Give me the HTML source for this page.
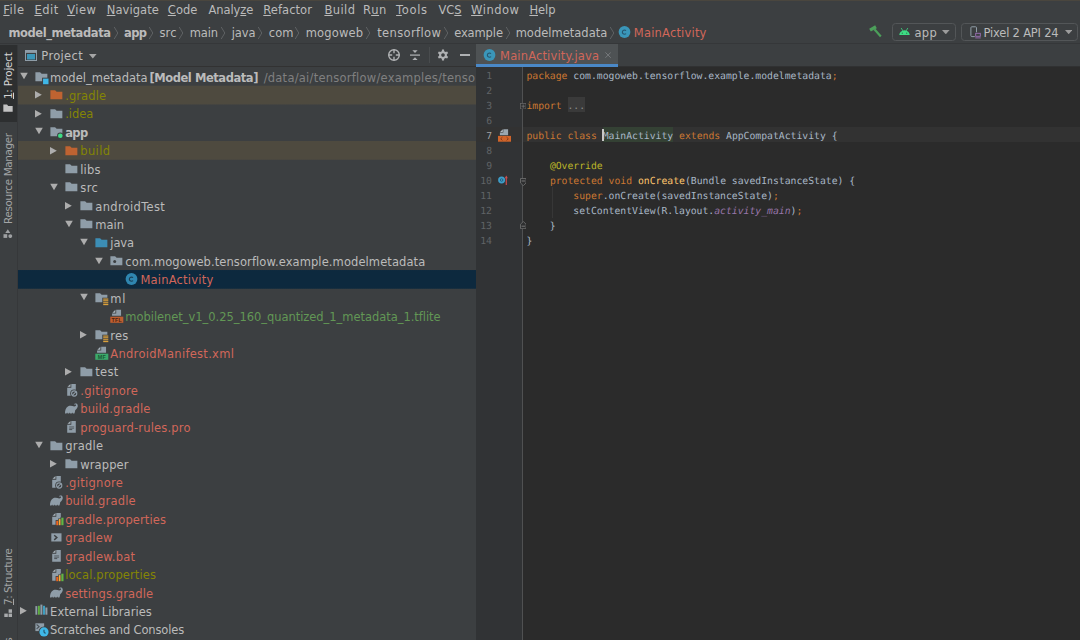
<!DOCTYPE html>
<html lang="en"><head><meta charset="utf-8"><title>model_metadata - MainActivity.java</title>
<style>
*{box-sizing:border-box}
html,body{margin:0;padding:0;width:1080px;height:640px;overflow:hidden;background:#3c3f41}
body{position:relative;font-family:"DejaVu Sans", "Liberation Sans", sans-serif;font-size:11.5px;color:#bbbbbb}
.t{position:absolute;white-space:pre;display:block}
.mi u{text-decoration:underline;text-decoration-thickness:1px;text-underline-offset:0.800px}
#topline{position:absolute;left:0;top:0;width:1080px;height:1px;background:#4a463e}
#navline{position:absolute;left:0;top:43.400px;width:1080px;height:1px;background:#353739}
#stripe{position:absolute;left:0;top:44.5px;width:17px;height:596px;background:#3c3f41}
#stripeb{position:absolute;left:17px;top:44.5px;width:1px;height:596px;background:#36383a}
#sbtn{position:absolute;left:0;top:44.5px;width:17px;height:77px;background:#2d2f30}
#pheadline{position:absolute;left:18px;top:66px;width:458px;height:1px;background:#323232}
#tree{position:absolute;left:18px;top:67px;width:457.600px;height:573px;background:#3c3f41}
#clip{position:absolute;left:0;top:0;width:475.600px;height:640px;overflow:hidden}
.band{position:absolute}
.arw{position:absolute;width:10px;height:10px}
.ic{position:absolute;width:16px;height:16px;display:block}
.chev{position:absolute;width:6px;height:14px}
#editor{position:absolute;left:475.600px;top:44.500px;width:605px;height:596px;background:#2b2b2b}
#tabbar{position:absolute;left:475.600px;top:44px;width:605px;height:23px;background:#3c3f41}
#tab{position:absolute;left:476px;top:44px;width:142px;height:23px;background:#4e5254}
#tabline{position:absolute;left:476px;top:66px;width:604px;height:1px;background:#303132}
#tabu{position:absolute;left:476px;top:63.600px;width:142px;height:3.400px;background:#4a88c7}
#gutter{position:absolute;left:475.600px;top:67px;width:46.400px;height:573px;background:#313335}
#gline{position:absolute;left:522.100px;top:67px;width:1.100px;height:573px;background:#505152}
.ln,.cl{position:absolute;text-rendering:geometricPrecision;font-family:"DejaVu Sans Mono", "Liberation Mono", monospace;font-size:9.760px;height:15.0px;line-height:15.0px;white-space:pre}
.ln{left:470px;width:22px;text-align:right;color:#606366}
.ln.cur{color:#a4a3a3}
.cl{left:526.400px;color:#a9b7c6}
.k{color:#cc7832} .an{color:#bbb529} .fn{color:#ffc66d} .sf{color:#9876aa;font-style:italic}
.fold{background:#3a3a3a;color:#8c8c8c;padding:3.700px 0 0}
.cls{background:#344134;padding:3.700px 0 0}
#curline{position:absolute;left:475.600px;top:127.00px;width:605px;height:15.0px;background:#323232}
.vt{position:absolute;white-space:pre;transform-origin:0 0;transform:rotate(-90deg);font-size:12px;line-height:13px;height:13px;color:#bbbbbb}
.vt u{text-decoration-thickness:1px;text-underline-offset:1px}
.combo{position:absolute;border:1px solid #535658;border-radius:3.500px;background:#3c3f41}
</style></head>
<body>
<div id="topline"></div>
<div id="menubar">
<span class="t mi" style="left:3.30px;top:1.60px;height:17.00px;line-height:17.00px;color:#bbbbbb;letter-spacing:0.501px;"><u>F</u>ile</span>
<span class="t mi" style="left:34.40px;top:1.60px;height:17.00px;line-height:17.00px;color:#bbbbbb;letter-spacing:0.489px;"><u>E</u>dit</span>
<span class="t mi" style="left:67.20px;top:1.60px;height:17.00px;line-height:17.00px;color:#bbbbbb;letter-spacing:0.436px;"><u>V</u>iew</span>
<span class="t mi" style="left:106.70px;top:1.60px;height:17.00px;line-height:17.00px;color:#bbbbbb;letter-spacing:0.096px;"><u>N</u>avigate</span>
<span class="t mi" style="left:167.80px;top:1.60px;height:17.00px;line-height:17.00px;color:#bbbbbb;letter-spacing:0.035px;"><u>C</u>ode</span>
<span class="t mi" style="left:208.60px;top:1.60px;height:17.00px;line-height:17.00px;color:#bbbbbb;letter-spacing:-0.100px;">Analy<u>z</u>e</span>
<span class="t mi" style="left:263.30px;top:1.60px;height:17.00px;line-height:17.00px;color:#bbbbbb;letter-spacing:0.046px;"><u>R</u>efactor</span>
<span class="t mi" style="left:324.40px;top:1.60px;height:17.00px;line-height:17.00px;color:#bbbbbb;letter-spacing:0.418px;"><u>B</u>uild</span>
<span class="t mi" style="left:363.02px;top:1.60px;height:17.00px;line-height:17.00px;color:#bbbbbb;letter-spacing:0.657px;">R<u>u</u>n</span>
<span class="t mi" style="left:396.10px;top:1.60px;height:17.00px;line-height:17.00px;color:#bbbbbb;letter-spacing:0.650px;"><u>T</u>ools</span>
<span class="t mi" style="left:438.60px;top:1.60px;height:17.00px;line-height:17.00px;color:#bbbbbb;letter-spacing:-0.101px;">VC<u>S</u></span>
<span class="t mi" style="left:471.10px;top:1.60px;height:17.00px;line-height:17.00px;color:#bbbbbb;letter-spacing:0.482px;"><u>W</u>indow</span>
<span class="t mi" style="left:529.40px;top:1.60px;height:17.00px;line-height:17.00px;color:#bbbbbb;letter-spacing:-0.043px;"><u>H</u>elp</span>
</div>
<div id="navbar">
<span class="t " style="left:8.42px;top:24.20px;height:18.00px;line-height:18.00px;color:#bbbbbb;letter-spacing:-0.410px;font-weight:bold;">model_metadata</span>
<span class="t " style="left:124.05px;top:24.20px;height:18.00px;line-height:18.00px;color:#bbbbbb;letter-spacing:-0.600px;font-weight:bold;">app</span>
<span class="t " style="left:159.41px;top:24.20px;height:18.00px;line-height:18.00px;color:#bbbbbb;letter-spacing:0.202px;">src</span>
<span class="t " style="left:189.65px;top:24.20px;height:18.00px;line-height:18.00px;color:#bbbbbb;letter-spacing:-0.116px;">main</span>
<span class="t " style="left:231.78px;top:24.20px;height:18.00px;line-height:18.00px;color:#bbbbbb;letter-spacing:-0.110px;">java</span>
<span class="t " style="left:268.86px;top:24.20px;height:18.00px;line-height:18.00px;color:#bbbbbb;letter-spacing:-0.032px;">com</span>
<span class="t " style="left:305.65px;top:24.20px;height:18.00px;line-height:18.00px;color:#bbbbbb;letter-spacing:0.169px;">mogoweb</span>
<span class="t " style="left:377.18px;top:24.20px;height:18.00px;line-height:18.00px;color:#bbbbbb;letter-spacing:0.381px;">tensorflow</span>
<span class="t " style="left:454.17px;top:24.20px;height:18.00px;line-height:18.00px;color:#bbbbbb;letter-spacing:-0.116px;">example</span>
<span class="t " style="left:515.65px;top:24.20px;height:18.00px;line-height:18.00px;color:#bbbbbb;letter-spacing:0.009px;">modelmetadata</span>
<svg class="chev" style="left:113.0px;top:25.5px" viewBox="0 0 6 14"><path d="M1.200 1l3.600 6-3.600 6" fill="none" stroke="#5e6163" stroke-width="1"/></svg>
<svg class="chev" style="left:147.7px;top:25.5px" viewBox="0 0 6 14"><path d="M1.200 1l3.600 6-3.600 6" fill="none" stroke="#5e6163" stroke-width="1"/></svg>
<svg class="chev" style="left:178.0px;top:25.5px" viewBox="0 0 6 14"><path d="M1.200 1l3.600 6-3.600 6" fill="none" stroke="#5e6163" stroke-width="1"/></svg>
<svg class="chev" style="left:219.7px;top:25.5px" viewBox="0 0 6 14"><path d="M1.200 1l3.600 6-3.600 6" fill="none" stroke="#5e6163" stroke-width="1"/></svg>
<svg class="chev" style="left:257.0px;top:25.5px" viewBox="0 0 6 14"><path d="M1.200 1l3.600 6-3.600 6" fill="none" stroke="#5e6163" stroke-width="1"/></svg>
<svg class="chev" style="left:294.3px;top:25.5px" viewBox="0 0 6 14"><path d="M1.200 1l3.600 6-3.600 6" fill="none" stroke="#5e6163" stroke-width="1"/></svg>
<svg class="chev" style="left:365.0px;top:25.5px" viewBox="0 0 6 14"><path d="M1.200 1l3.600 6-3.600 6" fill="none" stroke="#5e6163" stroke-width="1"/></svg>
<svg class="chev" style="left:443.0px;top:25.5px" viewBox="0 0 6 14"><path d="M1.200 1l3.600 6-3.600 6" fill="none" stroke="#5e6163" stroke-width="1"/></svg>
<svg class="chev" style="left:505.0px;top:25.5px" viewBox="0 0 6 14"><path d="M1.200 1l3.600 6-3.600 6" fill="none" stroke="#5e6163" stroke-width="1"/></svg>
<svg class="chev" style="left:609.0px;top:25.5px" viewBox="0 0 6 14"><path d="M1.200 1l3.600 6-3.600 6" fill="none" stroke="#5e6163" stroke-width="1"/></svg>
<svg class="ic" style="left:616.2px;top:24.1px" viewBox="0 0 16 16"><circle cx="8.500" cy="8" r="5.900" fill="#3a96b9"/><path d="M10 9.600a2.100 2.100 0 1 1 0-2.900" fill="none" stroke="#27566f" stroke-width="1.150"/></svg>
<span class="t " style="left:633.82px;top:24.20px;height:18.00px;line-height:18.00px;color:#d1675a;letter-spacing:0.194px;">MainActivity</span>
<svg style="position:absolute;left:868.00px;top:24.00px;width:15.00px;height:14.00px;" viewBox="0 0 15 14"><path d="M2 6.100L8 2.700" stroke="#4c9f5a" stroke-width="3.300" fill="none"/><path d="M6.400 5.300l6.400 7.100" stroke="#4c9f5a" stroke-width="2.200" fill="none"/></svg>
<div class="combo" style="left:892px;top:22.600px;width:63.800px;height:18.100px"></div>
<div class="combo" style="left:961.400px;top:22.800px;width:116.600px;height:17.900px"></div>
<svg style="position:absolute;left:898.80px;top:27.60px;width:11.00px;height:7.60px;" viewBox="0 0 11 7.600"><path d="M0.200 7.600a5.300 5.300 0 0 1 10.600 0z" fill="#3ddc84"/><path d="M2.300 0.300l1.500 2.400M8.700 0.300L7.200 2.700" stroke="#3ddc84" stroke-width="0.800" stroke-linecap="round"/><circle cx="3.300" cy="5.200" r="0.600" fill="#2b6b46"/><circle cx="7.700" cy="5.200" r="0.600" fill="#2b6b46"/></svg>
<svg style="position:absolute;left:942.30px;top:30.00px;width:7.60px;height:4.30px;" viewBox="0 0 7.600 4.300"><path d="M0 0h7.600L3.800 4.300z" fill="#9c9c9c"/></svg>
<svg style="position:absolute;left:970.00px;top:26.40px;width:11.00px;height:12.60px;" viewBox="0 0 11 12.600"><rect x="0.900" y="0.800" width="5.600" height="9.800" rx="0.900" fill="none" stroke="#929fa9" stroke-width="1"/><rect x="4.800" y="6.300" width="6" height="6.100" fill="#3c3f41"/><rect x="5.700" y="7.300" width="4.600" height="3" fill="none" stroke="#9d70b8" stroke-width="0.900"/><path d="M5.300 11.900h5.400" stroke="#9d70b8" stroke-width="0.900"/></svg>
<svg style="position:absolute;left:1064.60px;top:30.10px;width:7.40px;height:4.20px;" viewBox="0 0 7.400 4.200"><path d="M0 0h7.400L3.700 4.200z" fill="#9c9c9c"/></svg>
<span class="t " style="left:914.38px;top:23.50px;height:18.00px;line-height:18.00px;color:#bbbbbb;letter-spacing:0.349px;">app</span>
<span class="t " style="left:983.62px;top:23.50px;height:18.00px;line-height:18.00px;color:#bbbbbb;letter-spacing:-0.213px;">Pixel 2 API 24</span>
</div>
<div id="navline"></div>
<div id="stripe"></div><div id="sbtn"></div><div id="stripeb"></div>
<span class="vt" style="left:1.7px;top:98.50px;color:#d5d5d5;font-size:10.4px;letter-spacing:-0.244px;"><u>1</u>: Project</span>
<span class="vt" style="left:1.7px;top:224.31px;color:#a3a5a6;font-size:10.4px;letter-spacing:-0.363px;">Resource Manager</span>
<span class="vt" style="left:1.7px;top:604.50px;color:#a3a5a6;font-size:10.4px;letter-spacing:-0.434px;"><u>7</u>: Structure</span>
<span class="vt" style="left:1.7px;top:696.70px;color:#a3a5a6;font-size:10.4px;letter-spacing:-0.063px;">2: Favorites</span>
<svg style="position:absolute;left:3.00px;top:103.70px;width:10.00px;height:8.20px;" viewBox="0 0 10.200 8.600"><path d="M0.200 0.600h3.900l1.200 1.400h4.700v6.200H0.200z" fill="#c2c2c2"/></svg>
<svg style="position:absolute;left:3.20px;top:228.60px;width:9.60px;height:9.40px;" viewBox="0 0 9.600 9.400"><path d="M4.800 0.300L7.300 4H2.300z" fill="#9fa1a3"/><rect x="0.500" y="5.200" width="3.700" height="3.700" fill="#9fa1a3"/><circle cx="7.300" cy="7.100" r="1.950" fill="#9fa1a3"/></svg>
<svg style="position:absolute;left:3.90px;top:608.50px;width:8.40px;height:8.40px;" viewBox="0 0 8.400 8.400"><rect x="4.600" y="0.300" width="3.500" height="3.500" fill="#a9abad"/><rect x="0.300" y="4.600" width="3.500" height="3.500" fill="#a9abad"/><rect x="4.600" y="4.600" width="3.500" height="3.500" fill="#a9abad"/></svg>
<div id="phead">
<span class="t " style="left:41.32px;top:46.50px;height:18.00px;line-height:18.00px;color:#bbbbbb;letter-spacing:0.342px;">Project</span>
<svg style="position:absolute;left:25.00px;top:50.00px;width:12.00px;height:11.00px;" viewBox="0 0 12 11"><rect x="0.500" y="0.500" width="11" height="10" fill="none" stroke="#8f9da8" stroke-width="1"/><rect x="0.500" y="0.500" width="11" height="2.400" fill="#8f9da8"/><rect x="2" y="4" width="8" height="5.500" fill="#3d96b8"/></svg>
<svg style="position:absolute;left:89.20px;top:54.10px;width:7.60px;height:4.50px;" viewBox="0 0 7.600 4.400"><path d="M0 0h7.600L3.800 4.400z" fill="#a6a6a6"/></svg>
<svg style="position:absolute;left:386.60px;top:48.10px;width:14.00px;height:14.00px;" viewBox="0 0 14 14"><circle cx="7" cy="7" r="5.300" fill="none" stroke="#afb1b3" stroke-width="1.400"/><path d="M7 1.500v3.700M7 8.800v3.700M1.500 7h3.700M8.800 7h3.700" stroke="#afb1b3" stroke-width="1.400"/></svg>
<svg style="position:absolute;left:409.20px;top:49.00px;width:12.00px;height:12.20px;" viewBox="0 0 12 12.200"><path d="M1 6.100h10" stroke="#afb1b3" stroke-width="1.250"/><path d="M3.400 1.300h5.200L6 4z" fill="#afb1b3"/><path d="M3.400 10.900h5.200L6 8.200z" fill="#afb1b3"/></svg>
<div style="position:absolute;left:428.5px;top:47px;width:1px;height:16.400px;background:#494c4e"></div>
<svg style="position:absolute;left:436.00px;top:48.10px;width:14.00px;height:14.00px;" viewBox="0 0 14 14"><path d="M5.83 3.17L5.95 1.60L8.05 1.60L8.17 3.17L9.73 4.07L11.15 3.39L12.20 5.21L10.90 6.10L10.90 7.90L12.20 8.79L11.15 10.61L9.73 9.93L8.17 10.83L8.05 12.40L5.95 12.40L5.83 10.83L4.27 9.93L2.85 10.61L1.80 8.79L3.10 7.90L3.10 6.10L1.80 5.21L2.85 3.39L4.27 4.07z M7 5.200a1.800 1.800 0 1 0 0.001 0z" fill="#afb1b3" fill-rule="evenodd"/></svg>
<div style="position:absolute;left:459.600px;top:54.300px;width:10.400px;height:1.500px;background:#afb1b3"></div>
</div>
<div id="pheadline"></div>
<div id="clip">
<svg class="arw" style="left:19.00px;top:71.20px" viewBox="0 0 10 10"><path d="M1.200 1.800h7.600L5 8.300z" fill="#adadad"/></svg>
<svg class="ic" style="left:32.60px;top:68.90px" viewBox="0 0 16 16"><path d="M2.4 3.2h4.7l1.5 1.45h5.75v7.6H2.4z" fill="#8f9da8"/><rect x="9.100" y="8.700" width="7.400" height="7.500" fill="#3c3f41"/><rect x="10.050" y="9.600" width="5.450" height="5.600" fill="#3fb7e6"/></svg>
<span class="t " style="left:50.10px;top:68.50px;height:18.43px;line-height:18.43px;color:#bbbbbb;letter-spacing:0.018px;">model_metadata</span>
<span class="t " style="left:149.41px;top:68.50px;height:18.43px;line-height:18.43px;color:#bbbbbb;letter-spacing:-0.438px;font-weight:bold;">[Model Metadata]</span>
<span class="t" style="left:263.67px;top:68.00px;height:18.43px;line-height:18.43px;color:#808080;letter-spacing:0.249px;margin-top:0.5px">/data/ai/tensorflow/examples/tenso</span>
<div class="band ex" style="left:18px;top:85px;width:457.6px;height:20px;background:linear-gradient(to bottom,rgba(78,74,63,0.27) 0,rgba(78,74,63,0.27) 1px,rgb(78,74,63) 1px,rgb(78,74,63) 19px,rgba(78,74,63,0.46) 19px,rgba(78,74,63,0.46) 20px)"></div>
<svg class="arw" style="left:32.85px;top:90.33px" viewBox="0 0 10 10"><path d="M2 0.900v7.700l6.800-3.850z" fill="#adadad"/></svg>
<svg class="ic" style="left:47.65px;top:87.33px" viewBox="0 0 16 16"><path d="M2.4 3.2h4.7l1.5 1.45h5.75v7.6H2.4z" fill="#bf6331"/></svg>
<span class="t " style="left:65.15px;top:86.93px;height:18.43px;line-height:18.43px;color:#848504;letter-spacing:0.092px;">.gradle</span>
<svg class="arw" style="left:32.85px;top:108.76px" viewBox="0 0 10 10"><path d="M2 0.900v7.700l6.800-3.850z" fill="#adadad"/></svg>
<svg class="ic" style="left:47.65px;top:105.76px" viewBox="0 0 16 16"><path d="M2.4 3.2h4.7l1.5 1.45h5.75v7.6H2.4z" fill="#8f9da8"/></svg>
<span class="t " style="left:65.15px;top:105.36px;height:18.43px;line-height:18.43px;color:#848504;letter-spacing:-0.016px;">.idea</span>
<svg class="arw" style="left:34.05px;top:126.49px" viewBox="0 0 10 10"><path d="M1.200 1.800h7.600L5 8.300z" fill="#adadad"/></svg>
<svg class="ic" style="left:47.65px;top:124.19px" viewBox="0 0 16 16"><path d="M2.4 3.2h4.7l1.5 1.45h5.75v7.6H2.4z" fill="#8f9da8"/><circle cx="12.300" cy="11.800" r="3.200" fill="#3c3f41"/><circle cx="12.300" cy="11.800" r="2.300" fill="#3ddc84"/></svg>
<span class="t " style="left:65.15px;top:123.79px;height:18.43px;line-height:18.43px;color:#bbbbbb;letter-spacing:-0.600px;font-weight:bold;">app</span>
<div class="band ex" style="left:18px;top:141px;width:457.6px;height:19px;background:linear-gradient(to bottom,rgba(78,74,63,0.98) 0,rgba(78,74,63,0.98) 1px,rgb(78,74,63) 1px,rgb(78,74,63) 18px,rgba(78,74,63,0.75) 18px,rgba(78,74,63,0.75) 19px)"></div>
<svg class="arw" style="left:47.90px;top:145.62px" viewBox="0 0 10 10"><path d="M2 0.900v7.700l6.800-3.850z" fill="#adadad"/></svg>
<svg class="ic" style="left:62.70px;top:142.62px" viewBox="0 0 16 16"><path d="M2.4 3.2h4.7l1.5 1.45h5.75v7.6H2.4z" fill="#bf6331"/></svg>
<span class="t " style="left:80.20px;top:142.22px;height:18.43px;line-height:18.43px;color:#848504;letter-spacing:0.409px;">build</span>
<svg class="ic" style="left:62.70px;top:161.05px" viewBox="0 0 16 16"><path d="M2.4 3.2h4.7l1.5 1.45h5.75v7.6H2.4z" fill="#8f9da8"/></svg>
<span class="t " style="left:80.20px;top:160.65px;height:18.43px;line-height:18.43px;color:#bbbbbb;letter-spacing:0.170px;">libs</span>
<svg class="arw" style="left:49.10px;top:181.78px" viewBox="0 0 10 10"><path d="M1.200 1.800h7.600L5 8.300z" fill="#adadad"/></svg>
<svg class="ic" style="left:62.70px;top:179.48px" viewBox="0 0 16 16"><path d="M2.4 3.2h4.7l1.5 1.45h5.75v7.6H2.4z" fill="#8f9da8"/></svg>
<span class="t " style="left:80.20px;top:179.08px;height:18.43px;line-height:18.43px;color:#bbbbbb;letter-spacing:0.457px;">src</span>
<svg class="arw" style="left:62.95px;top:200.91px" viewBox="0 0 10 10"><path d="M2 0.900v7.700l6.800-3.850z" fill="#adadad"/></svg>
<svg class="ic" style="left:77.75px;top:197.91px" viewBox="0 0 16 16"><path d="M2.4 3.2h4.7l1.5 1.45h5.75v7.6H2.4z" fill="#8f9da8"/></svg>
<span class="t " style="left:95.25px;top:197.51px;height:18.43px;line-height:18.43px;color:#bbbbbb;letter-spacing:0.332px;">androidTest</span>
<svg class="arw" style="left:64.15px;top:218.64px" viewBox="0 0 10 10"><path d="M1.200 1.800h7.600L5 8.300z" fill="#adadad"/></svg>
<svg class="ic" style="left:77.75px;top:216.34px" viewBox="0 0 16 16"><path d="M2.4 3.2h4.7l1.5 1.45h5.75v7.6H2.4z" fill="#8f9da8"/></svg>
<span class="t " style="left:95.25px;top:215.94px;height:18.43px;line-height:18.43px;color:#bbbbbb;letter-spacing:-0.014px;">main</span>
<svg class="arw" style="left:79.20px;top:237.07px" viewBox="0 0 10 10"><path d="M1.200 1.800h7.600L5 8.300z" fill="#adadad"/></svg>
<svg class="ic" style="left:92.80px;top:234.77px" viewBox="0 0 16 16"><path d="M2.4 3.2h4.7l1.5 1.45h5.75v7.6H2.4z" fill="#3c8eb6"/></svg>
<span class="t " style="left:110.30px;top:234.37px;height:18.43px;line-height:18.43px;color:#bbbbbb;letter-spacing:-0.084px;">java</span>
<svg class="arw" style="left:94.25px;top:255.50px" viewBox="0 0 10 10"><path d="M1.200 1.800h7.600L5 8.300z" fill="#adadad"/></svg>
<svg class="ic" style="left:107.85px;top:253.20px" viewBox="0 0 16 16"><path d="M2.4 3.2h4.7l1.5 1.45h5.75v7.6H2.4z" fill="#8f9da8"/><circle cx="6.700" cy="8.400" r="1.500" fill="#3c3f41"/></svg>
<span class="t " style="left:125.35px;top:252.80px;height:18.43px;line-height:18.43px;color:#bbbbbb;letter-spacing:0.095px;">com.mogoweb.tensorflow.example.modelmetadata</span>
<div class="band sel" style="left:18px;top:270px;width:457.6px;height:19px;background:linear-gradient(to bottom,rgba(13,41,62,0.97) 0,rgba(13,41,62,0.97) 1px,rgb(13,41,62) 1px,rgb(13,41,62) 18px,rgba(13,41,62,0.76) 18px,rgba(13,41,62,0.76) 19px)"></div>
<svg class="ic" style="left:122.90px;top:271.13px" viewBox="0 0 16 16"><circle cx="8.500" cy="8" r="5.900" fill="#2f86b0"/><path d="M10 9.600a2.100 2.100 0 1 1 0-2.900" fill="none" stroke="#1b3f56" stroke-width="1.200"/></svg>
<span class="t " style="left:140.40px;top:271.23px;height:18.43px;line-height:18.43px;color:#d1675a;letter-spacing:0.214px;">MainActivity</span>
<svg class="arw" style="left:79.20px;top:292.36px" viewBox="0 0 10 10"><path d="M1.200 1.800h7.600L5 8.300z" fill="#adadad"/></svg>
<svg class="ic" style="left:92.80px;top:290.06px" viewBox="0 0 16 16"><path d="M2.4 3.2h4.7l1.5 1.45h5.75v7.6H2.4z" fill="#8f9da8"/><rect x="9.300" y="7.700" width="7" height="8.500" fill="#3c3f41"/><rect x="10.200" y="8.5" width="5.100" height="1.150" fill="#dba13c"/><rect x="10.200" y="10.2" width="5.100" height="1.150" fill="#dba13c"/><rect x="10.200" y="12.2" width="5.100" height="1.150" fill="#dba13c"/><rect x="10.200" y="14.0" width="5.100" height="1.150" fill="#dba13c"/></svg>
<span class="t " style="left:110.30px;top:289.66px;height:18.43px;line-height:18.43px;color:#bbbbbb;letter-spacing:0.700px;">ml</span>
<svg class="ic" style="left:107.85px;top:308.49px" viewBox="0 0 16 16"><path d="M8.2 1.7h4.85v6.1h-9V5.6h4.15z" fill="#8f9da8"/><path d="M4.4 4.7h3v-2.9z" fill="#a9b4bc"/><rect x="2.3" y="8.7" width="13" height="6.1" fill="#bf5e30"/><text x="8.8" y="13.7" font-family="Liberation Sans, sans-serif" font-size="5.4" font-weight="bold" fill="#4a2410" text-anchor="middle" letter-spacing="0.2">TFL</text></svg>
<span class="t " style="left:125.35px;top:308.09px;height:18.43px;line-height:18.43px;color:#629755;letter-spacing:-0.043px;">mobilenet_v1_0.25_160_quantized_1_metadata_1.tflite</span>
<svg class="arw" style="left:78.00px;top:329.92px" viewBox="0 0 10 10"><path d="M2 0.900v7.700l6.800-3.850z" fill="#adadad"/></svg>
<svg class="ic" style="left:92.80px;top:326.92px" viewBox="0 0 16 16"><path d="M2.4 3.2h4.7l1.5 1.45h5.75v7.6H2.4z" fill="#8f9da8"/><rect x="9.300" y="7.700" width="7" height="8.500" fill="#3c3f41"/><rect x="10.200" y="8.5" width="5.100" height="1.150" fill="#dba13c"/><rect x="10.200" y="10.2" width="5.100" height="1.150" fill="#dba13c"/><rect x="10.200" y="12.2" width="5.100" height="1.150" fill="#dba13c"/><rect x="10.200" y="14.0" width="5.100" height="1.150" fill="#dba13c"/></svg>
<span class="t " style="left:110.30px;top:326.52px;height:18.43px;line-height:18.43px;color:#bbbbbb;letter-spacing:0.178px;">res</span>
<svg class="ic" style="left:92.80px;top:345.35px" viewBox="0 0 16 16"><path d="M8.2 1.7h4.85v6.1h-9V5.6h4.15z" fill="#8f9da8"/><path d="M4.4 4.7h3v-2.9z" fill="#a9b4bc"/><rect x="2.3" y="8.7" width="13" height="6.1" fill="#3baa6c"/><text x="8.8" y="13.7" font-family="Liberation Sans, sans-serif" font-size="5.4" font-weight="bold" fill="#1b5733" text-anchor="middle" letter-spacing="0.2">MF</text></svg>
<span class="t " style="left:110.30px;top:344.95px;height:18.43px;line-height:18.43px;color:#d1675a;letter-spacing:0.289px;">AndroidManifest.xml</span>
<svg class="arw" style="left:62.95px;top:366.78px" viewBox="0 0 10 10"><path d="M2 0.900v7.700l6.800-3.850z" fill="#adadad"/></svg>
<svg class="ic" style="left:77.75px;top:363.78px" viewBox="0 0 16 16"><path d="M2.4 3.2h4.7l1.5 1.45h5.75v7.6H2.4z" fill="#8f9da8"/></svg>
<span class="t " style="left:95.25px;top:363.38px;height:18.43px;line-height:18.43px;color:#bbbbbb;letter-spacing:0.310px;">test</span>
<svg class="ic" style="left:62.70px;top:382.21px" viewBox="0 0 16 16"><path d="M8.3 1.9h4.5v11.9H4.2v-8h4.1z" fill="#8f9da8"/><path d="M4.5 4.8h3v-2.9z" fill="#a9b4bc"/><circle cx="11.200" cy="11.500" r="4" fill="#3c3f41"/><circle cx="11.200" cy="11.500" r="2.600" fill="none" stroke="#8f9da8" stroke-width="1.100"/><path d="M9.500 13.200l3.400-3.400" stroke="#8f9da8" stroke-width="1.100"/></svg>
<span class="t " style="left:80.20px;top:381.81px;height:18.43px;line-height:18.43px;color:#d1675a;letter-spacing:0.299px;">.gitignore</span>
<svg class="ic" style="left:62.70px;top:400.64px" viewBox="0 0 16 16"><path d="M2 12.5C1.9 9.5 2.8 6.4 5.2 5.2c1.6-.7 4.2-.6 6 .4 1.200-.4 1.900-1 1.900-1.700 0-.4-.6-.4-1.400 0l-.4-.9c1.300-.7 2.700-.5 3.300.8.700 1.800-.5 4-2.400 5.400-.1 1.200-.4 2.300-.8 3.300H9.900l-.6-1-.6 1H7.300l-.6-1-.6 1H4.700l-.6-1-.6 1z" fill="#8f9da8"/></svg>
<span class="t " style="left:80.20px;top:400.24px;height:18.43px;line-height:18.43px;color:#d1675a;letter-spacing:0.147px;">build.gradle</span>
<svg class="ic" style="left:62.70px;top:419.07px" viewBox="0 0 16 16"><path d="M8.3 1.9h4.5v11.9H4.2v-8h4.1z" fill="#8f9da8"/><path d="M4.5 4.8h3v-2.9z" fill="#a9b4bc"/><rect x="6.200" y="7.500" width="4.900" height="0.800" fill="#50565b"/><rect x="6.200" y="8.800" width="4.900" height="0.800" fill="#50565b"/><rect x="6.200" y="10.200" width="3" height="0.900" fill="#43484c"/></svg>
<span class="t " style="left:80.20px;top:418.67px;height:18.43px;line-height:18.43px;color:#d1675a;letter-spacing:0.182px;">proguard-rules.pro</span>
<svg class="arw" style="left:34.05px;top:439.80px" viewBox="0 0 10 10"><path d="M1.200 1.800h7.600L5 8.300z" fill="#adadad"/></svg>
<svg class="ic" style="left:47.65px;top:437.50px" viewBox="0 0 16 16"><path d="M2.4 3.2h4.7l1.5 1.45h5.75v7.6H2.4z" fill="#8f9da8"/></svg>
<span class="t " style="left:65.15px;top:437.10px;height:18.43px;line-height:18.43px;color:#bbbbbb;letter-spacing:0.234px;">gradle</span>
<svg class="arw" style="left:47.90px;top:458.93px" viewBox="0 0 10 10"><path d="M2 0.900v7.700l6.800-3.850z" fill="#adadad"/></svg>
<svg class="ic" style="left:62.70px;top:455.93px" viewBox="0 0 16 16"><path d="M2.4 3.2h4.7l1.5 1.45h5.75v7.6H2.4z" fill="#8f9da8"/></svg>
<span class="t " style="left:80.20px;top:455.53px;height:18.43px;line-height:18.43px;color:#bbbbbb;letter-spacing:0.118px;">wrapper</span>
<svg class="ic" style="left:47.65px;top:474.36px" viewBox="0 0 16 16"><path d="M8.3 1.9h4.5v11.9H4.2v-8h4.1z" fill="#8f9da8"/><path d="M4.5 4.8h3v-2.9z" fill="#a9b4bc"/><circle cx="11.200" cy="11.500" r="4" fill="#3c3f41"/><circle cx="11.200" cy="11.500" r="2.600" fill="none" stroke="#8f9da8" stroke-width="1.100"/><path d="M9.500 13.200l3.400-3.400" stroke="#8f9da8" stroke-width="1.100"/></svg>
<span class="t " style="left:65.15px;top:473.96px;height:18.43px;line-height:18.43px;color:#d1675a;letter-spacing:0.305px;">.gitignore</span>
<svg class="ic" style="left:47.65px;top:492.79px" viewBox="0 0 16 16"><path d="M2 12.5C1.9 9.5 2.8 6.4 5.2 5.2c1.6-.7 4.2-.6 6 .4 1.200-.4 1.900-1 1.900-1.700 0-.4-.6-.4-1.400 0l-.4-.9c1.300-.7 2.700-.5 3.300.8.700 1.800-.5 4-2.400 5.400-.1 1.200-.4 2.300-.8 3.300H9.900l-.6-1-.6 1H7.300l-.6-1-.6 1H4.700l-.6-1-.6 1z" fill="#8f9da8"/></svg>
<span class="t " style="left:65.15px;top:492.39px;height:18.43px;line-height:18.43px;color:#d1675a;letter-spacing:0.175px;">build.gradle</span>
<svg class="ic" style="left:47.65px;top:511.22px" viewBox="0 0 16 16"><path d="M8.3 1.9h4.5v11.9H4.2v-8h4.1z" fill="#8f9da8"/><path d="M4.5 4.8h3v-2.9z" fill="#a9b4bc"/><path d="M7.600 15V9.100h2.500V7.400h2.500V6h3.600v9z" fill="#3c3f41"/><rect x="8.300" y="9.800" width="1.900" height="4.400" fill="#f0641e"/><rect x="10.800" y="8.100" width="1.700" height="6.100" fill="#f4af3d"/><rect x="13.300" y="6.700" width="2.200" height="7.500" fill="#62b543"/></svg>
<span class="t " style="left:65.15px;top:510.82px;height:18.43px;line-height:18.43px;color:#d1675a;letter-spacing:0.116px;">gradle.properties</span>
<svg class="ic" style="left:47.65px;top:529.65px" viewBox="0 0 16 16"><rect x="3.300" y="3.300" width="10.200" height="8.200" fill="#8f9da8"/><path d="M6.200 5.300l2.700 2.300-2.700 2.300" fill="none" stroke="#3c3f41" stroke-width="1.400"/></svg>
<span class="t " style="left:65.15px;top:529.25px;height:18.43px;line-height:18.43px;color:#d1675a;letter-spacing:0.199px;">gradlew</span>
<svg class="ic" style="left:47.65px;top:548.08px" viewBox="0 0 16 16"><path d="M8.3 1.9h4.5v11.9H4.2v-8h4.1z" fill="#8f9da8"/><path d="M4.5 4.8h3v-2.9z" fill="#a9b4bc"/><rect x="6.200" y="7.500" width="4.900" height="0.800" fill="#50565b"/><rect x="6.200" y="8.800" width="4.900" height="0.800" fill="#50565b"/><rect x="6.200" y="10.200" width="3" height="0.900" fill="#43484c"/></svg>
<span class="t " style="left:65.15px;top:547.68px;height:18.43px;line-height:18.43px;color:#d1675a;letter-spacing:0.244px;">gradlew.bat</span>
<svg class="ic" style="left:47.65px;top:566.51px" viewBox="0 0 16 16"><path d="M8.3 1.9h4.5v11.9H4.2v-8h4.1z" fill="#8f9da8"/><path d="M4.5 4.8h3v-2.9z" fill="#a9b4bc"/><path d="M7.600 15V9.100h2.500V7.400h2.500V6h3.600v9z" fill="#3c3f41"/><rect x="8.300" y="9.800" width="1.900" height="4.400" fill="#f0641e"/><rect x="10.800" y="8.100" width="1.700" height="6.100" fill="#f4af3d"/><rect x="13.300" y="6.700" width="2.200" height="7.500" fill="#62b543"/></svg>
<span class="t " style="left:65.15px;top:566.11px;height:18.43px;line-height:18.43px;color:#848504;letter-spacing:0.110px;">local.properties</span>
<svg class="ic" style="left:47.65px;top:584.94px" viewBox="0 0 16 16"><path d="M2 12.5C1.9 9.5 2.8 6.4 5.2 5.2c1.6-.7 4.2-.6 6 .4 1.200-.4 1.900-1 1.900-1.700 0-.4-.6-.4-1.400 0l-.4-.9c1.300-.7 2.700-.5 3.300.8.700 1.800-.5 4-2.400 5.400-.1 1.200-.4 2.300-.8 3.300H9.900l-.6-1-.6 1H7.300l-.6-1-.6 1H4.700l-.6-1-.6 1z" fill="#8f9da8"/></svg>
<span class="t " style="left:65.15px;top:584.54px;height:18.43px;line-height:18.43px;color:#d1675a;letter-spacing:0.124px;">settings.gradle</span>
<svg class="arw" style="left:17.80px;top:606.37px" viewBox="0 0 10 10"><path d="M2 0.900v7.700l6.800-3.850z" fill="#adadad"/></svg>
<svg class="ic" style="left:32.60px;top:603.37px" viewBox="0 0 16 16"><rect x="2.400" y="3.100" width="1.900" height="8.600" fill="#8f9da8"/><rect x="5.050" y="2.800" width="1.750" height="8.900" fill="#62b543"/><rect x="7.400" y="1.600" width="2" height="10.100" fill="#8f9da8"/><rect x="10.200" y="2.800" width="1.600" height="8.900" fill="#40b6e0"/><rect x="12.400" y="4.500" width="2" height="7.200" fill="#8f9da8"/></svg>
<span class="t " style="left:50.10px;top:602.97px;height:18.43px;line-height:18.43px;color:#bbbbbb;letter-spacing:0.038px;">External Libraries</span>
<svg class="ic" style="left:32.60px;top:621.80px" viewBox="0 0 16 16"><rect x="2.400" y="1.300" width="8.750" height="7.800" fill="#8f9da8"/><path d="M3.600 2.500l2.500 2.150-2.500 2.150" fill="none" stroke="#4a5157" stroke-width="1.100"/><circle cx="11" cy="9.900" r="5.400" fill="#3c3f41"/><circle cx="11" cy="9.900" r="4.600" fill="#3fb7e6"/><path d="M11 7.700v2.300l1.500 1.500" fill="none" stroke="#245a74" stroke-width="1.200"/></svg>
<span class="t " style="left:50.10px;top:621.40px;height:18.43px;line-height:18.43px;color:#bbbbbb;letter-spacing:-0.145px;">Scratches and Consoles</span>
</div>
<div id="editor"></div>
<div id="tabbar"></div><div id="tabline"></div><div id="tab"></div><div id="tabu"></div>
<span class="t " style="left:500.12px;top:46.90px;height:18.00px;line-height:18.00px;color:#d1675a;letter-spacing:0.147px;">MainActivity.java</span>
<svg class="ic" style="left:481.15px;top:47.4px" viewBox="0 0 16 16"><circle cx="8.500" cy="8" r="5.900" fill="#3a96b9"/><path d="M10 9.600a2.100 2.100 0 1 1 0-2.900" fill="none" stroke="#27566f" stroke-width="1.150"/></svg>
<svg style="position:absolute;left:605.00px;top:52.30px;width:6.20px;height:6.20px;" viewBox="0 0 6.200 6.200"><path d="M0.400 0.400l5.400 5.400M5.800 0.400l-5.400 5.400" stroke="#7a7d7f" stroke-width="0.900" fill="none"/></svg>
<div id="gutter"></div>
<div id="curline"></div>
<div id="gline"></div>
<svg style="position:absolute;left:519.60px;top:102.70px;width:6.40px;height:6.40px;" viewBox="0 0 6.400 6.400"><rect x="0.400" y="0.400" width="5.600" height="5.600" fill="#2d2e2f" stroke="#646464" stroke-width="0.800"/><path d="M1.500 3.200h3.400M3.200 1.500v3.400" stroke="#747474" stroke-width="0.800"/></svg>
<svg style="position:absolute;left:519.70px;top:177.70px;width:6.60px;height:8.20px;" viewBox="0 0 6.600 8.200"><path d="M0.500 0.500h5.600v4.500L3.300 7.700 0.500 5z" fill="#2e2f30" stroke="#6c6c6c" stroke-width="0.900"/><path d="M1.600 3h3.400" stroke="#808080" stroke-width="0.900"/></svg>
<svg style="position:absolute;left:519.70px;top:221.10px;width:6.60px;height:8.20px;" viewBox="0 0 6.600 8.200"><path d="M0.500 7.700h5.600V3.200L3.300 0.500 0.500 3.200z" fill="#2e2f30" stroke="#6c6c6c" stroke-width="0.900"/><path d="M1.600 5.200h3.400" stroke="#808080" stroke-width="0.900"/></svg>
<svg style="position:absolute;left:498.00px;top:128.50px;width:13.00px;height:13.00px;" viewBox="0 0 13 13"><path d="M5.300 0.300h4.800v5.900H1.900V3.400h3.400z" fill="#9aa7b0"/><path d="M2.100 2.900h2.700V0.300z" fill="#b4bdc4"/><rect x="0" y="6.900" width="13" height="5.800" fill="#d0642a"/><path d="M4.400 8.200L2.700 9.800l1.700 1.600M8.600 8.200l1.700 1.600-1.700 1.600" fill="none" stroke="#7a3818" stroke-width="0.900"/></svg>
<svg style="position:absolute;left:498.00px;top:174.85px;width:10.40px;height:11.00px;" viewBox="0 0 10.400 11"><circle cx="3.600" cy="5" r="3.500" fill="#3e9dc8"/><circle cx="3.600" cy="5" r="1.300" fill="none" stroke="#235a78" stroke-width="0.900"/><path d="M8.300 2.400v7.600" stroke="#c94a4a" stroke-width="1.200"/><path d="M6.800 3.200L8.300 0.600l1.500 2.600z" fill="#d14f4f"/></svg>
<div style="position:absolute;left:551.700px;top:187.00px;width:1px;height:30.50px;background:#373737"></div>
<div id="caret" style="position:absolute;left:602px;top:128.60px;width:1.800px;height:12.80px;background:#c8c8c8;z-index:5"></div>
<div id="code">
<div class="ln" style="top:69.00px">1</div>
<div class="cl" style="top:69.00px"><span class="k">package</span> com.mogoweb.tensorflow.example.modelmetadata<span class="k">;</span></div>
<div class="ln" style="top:84.00px">2</div>
<div class="ln" style="top:99.00px">3</div>
<div class="cl" style="top:99.00px"><span class="k">import</span> <span class="fold">...</span></div>
<div class="ln" style="top:114.00px">6</div>
<div class="ln cur" style="top:129.00px">7</div>
<div class="cl" style="top:129.00px"><span class="k">public class</span> <span class="cls">MainActivity</span> <span class="k">extends</span> AppCompatActivity {</div>
<div class="ln" style="top:144.00px">8</div>
<div class="ln" style="top:159.00px">9</div>
<div class="cl" style="top:159.00px">    <span class="an">@Override</span></div>
<div class="ln" style="top:174.00px">10</div>
<div class="cl" style="top:174.00px">    <span class="k">protected void</span> <span class="fn">onCreate</span>(Bundle savedInstanceState) {</div>
<div class="ln" style="top:189.00px">11</div>
<div class="cl" style="top:189.00px">        <span class="k">super</span>.onCreate(savedInstanceState)<span class="k">;</span></div>
<div class="ln" style="top:204.00px">12</div>
<div class="cl" style="top:204.00px">        setContentView(R.layout.<span class="sf">activity_main</span>)<span class="k">;</span></div>
<div class="ln" style="top:219.00px">13</div>
<div class="cl" style="top:219.00px">    }</div>
<div class="ln" style="top:234.00px">14</div>
<div class="cl" style="top:234.00px">}</div>
</div>
</body></html>
